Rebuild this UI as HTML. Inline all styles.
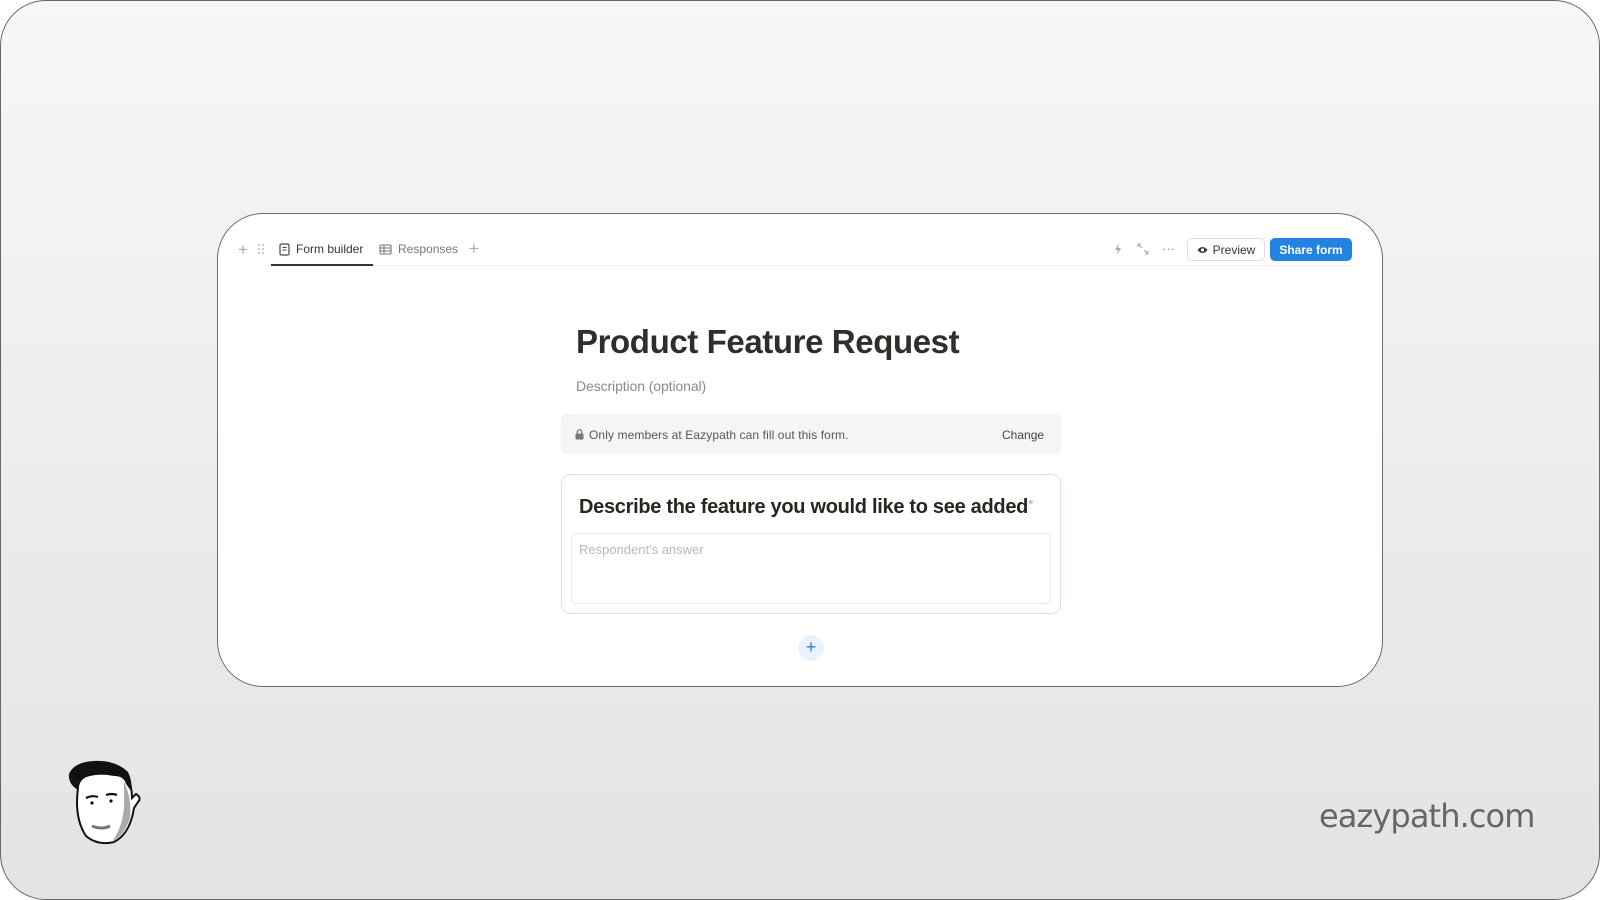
<!DOCTYPE html>
<html><head><meta charset="utf-8"><style>
*{box-sizing:border-box;margin:0;padding:0}
html,body{width:1600px;height:900px;overflow:hidden;background:#fff}
body{font-family:"Liberation Sans",sans-serif;position:relative}
.frame{position:absolute;left:0;top:0;width:1600px;height:900px;border:1.5px solid #666;border-radius:46px;background:linear-gradient(#f7f7f7,#e3e3e3);overflow:hidden}
.card{position:absolute;left:217px;top:213px;width:1166px;height:474px;background:#fff;border:1.5px solid #6a6a6a;border-radius:46px}
.abs{position:absolute}
.tab{position:absolute;top:242px;font-size:12px;color:#37352f;display:flex;align-items:center;gap:6px}
.btn{position:absolute;top:238px;height:23px;border-radius:5px;font-size:12px;display:flex;align-items:center;justify-content:center}
</style></head><body>
<div class="frame"></div>
<div class="card"></div>
<div class="abs" style="left:238px;top:242px;color:#aaa;font-size:17px;line-height:16px">+</div>
<svg class="abs" style="left:257px;top:243px" width="8" height="12"><g fill="#bbb"><circle cx="2" cy="2" r="1"/><circle cx="6" cy="2" r="1"/><circle cx="2" cy="6" r="1"/><circle cx="6" cy="6" r="1"/><circle cx="2" cy="10" r="1"/><circle cx="6" cy="10" r="1"/></g></svg>
<div class="tab" style="left:279px"><svg width="11" height="13"><rect x="1" y="1" width="9" height="11" rx="1.5" fill="none" stroke="#444" stroke-width="1.2"/><path d="M3.5 4.5h4M3.5 7h4" stroke="#444"/></svg><span style="font-weight:500">Form builder</span></div>
<div class="abs" style="left:271px;top:264px;width:102px;height:2px;background:#37352f"></div>
<div class="abs" style="left:373px;top:265px;width:980px;height:1px;background:#eee"></div>
<div class="tab" style="left:379px;color:#777"><svg width="13" height="11"><rect x="1" y="1" width="11" height="9" rx="1" fill="none" stroke="#777" stroke-width="1.1"/><path d="M1 4h11M1 7h11M5 1v9" stroke="#777"/></svg><span>Responses</span></div>
<div class="abs" style="left:469px;top:241px;color:#aaa;font-size:17px;line-height:16px">+</div>
<svg class="abs" style="left:1113px;top:242px" width="10" height="14"><path d="M6 1L2 8h3l-1 5 4-7H5z" fill="#aaa"/></svg>
<svg class="abs" style="left:1137px;top:243px" width="12" height="12"><path d="M1 1l4 4M1 1v3M1 1h3M11 11L7 7M11 11V8M11 11H8" stroke="#aaa" stroke-width="1.1" fill="none"/></svg>
<div class="abs" style="left:1162px;top:241px;color:#888;font-size:13px">···</div>
<div class="btn" style="left:1187px;width:78px;border:1px solid #ddd;color:#37352f;gap:5px"><svg width="11" height="8"><path d="M0.5 4Q5.5-2 10.5 4Q5.5 10 0.5 4z" fill="#333"/><circle cx="5.5" cy="4" r="1.6" fill="#fff"/></svg>Preview</div>
<div class="btn" style="left:1270px;width:82px;background:#2383e2;color:#fff;font-weight:bold">Share form</div>
<div class="abs" style="left:576px;top:323px;font-size:33px;font-weight:bold;color:#2f2e2a;letter-spacing:-0.4px">Product Feature Request</div>
<div class="abs" style="left:576px;top:378px;font-size:14px;color:#8a8a8a;letter-spacing:-0.1px">Description (optional)</div>
<div class="abs" style="left:561px;top:414px;width:500px;height:40px;background:#f6f5f3;border-radius:5px"></div>
<svg class="abs" style="left:575px;top:429px" width="9" height="11"><rect x="0.5" y="4.5" width="8" height="6" rx="1" fill="#777"/><path d="M2.3 4.5V3a2.2 2.2 0 014.4 0v1.5" stroke="#777" stroke-width="1.3" fill="none"/></svg>
<div class="abs" style="left:589px;top:428px;font-size:12px;color:#555;letter-spacing:0.1px">Only members at Eazypath can fill out this form.</div>
<div class="abs" style="left:1002px;top:428px;font-size:12px;color:#444;font-weight:500">Change</div>
<div class="abs" style="left:561px;top:474px;width:500px;height:140px;border:1px solid #cfe3fa;border-radius:9px"></div>
<div class="abs" style="left:579px;top:496px;font-size:20px;font-weight:bold;color:#27261f;letter-spacing:-0.3px">Describe the feature you would like to see added<span style="color:#aaa;font-weight:normal;font-size:14px;vertical-align:top">*</span></div>
<div class="abs" style="left:571px;top:533px;width:480px;height:71px;border:1px solid #eaeaea;border-radius:5px"></div>
<div class="abs" style="left:579px;top:542px;font-size:13px;color:#b8b8b8">Respondent's answer</div>
<div class="abs" style="left:798px;top:635px;width:26px;height:26px;border-radius:50%;background:#eaf2fc;color:#2383e2;font-size:18px;line-height:25px;text-align:center">+</div>
<div class="abs" style="left:1319px;top:797px;font-size:32px;color:#666;font-family:'DejaVu Sans','Liberation Sans',sans-serif;letter-spacing:-0.9px">eazypath.com</div>
<svg class="abs" style="left:64px;top:758px" width="80" height="90" viewBox="0 0 80 90">
<path d="M14 30Q10 60 22 78Q34 88 50 84Q66 76 70 50L74 44Q78 40 72 36L68 40Q68 22 58 18Q40 10 22 18Q14 22 14 30z" fill="#fff" stroke="#111" stroke-width="2"/>
<path d="M5 16Q10 4 30 3Q52 2 64 14Q68 22 68 34L62 26Q60 18 50 18Q30 14 16 22L14 32Q4 26 5 16z" fill="#111"/>
<path d="M60 24Q68 40 66 60Q60 78 48 84Q58 70 60 50z" fill="#aaa"/>
<path d="M22 40q6-3 12-1M42 37q6-2 11 0" stroke="#111" stroke-width="2.2" fill="none"/>
<circle cx="28" cy="45" r="1.6" fill="#111"/><circle cx="47" cy="43" r="1.6" fill="#111"/>
<path d="M28 68q10 4 18 0" stroke="#777" stroke-width="3" fill="none"/>
</svg>
</body></html>
